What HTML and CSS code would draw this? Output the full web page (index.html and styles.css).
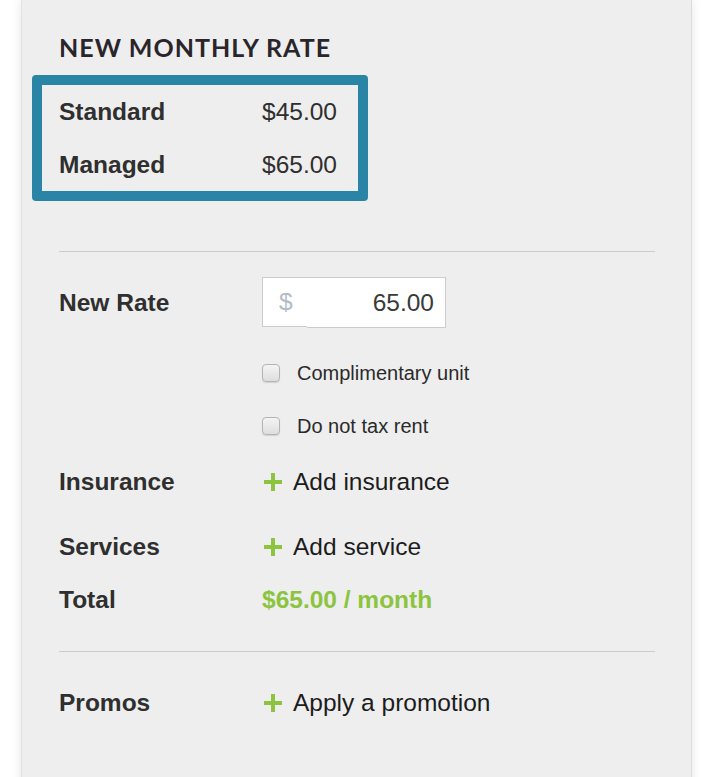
FILE: index.html
```html
<!DOCTYPE html>
<html>
<head>
<meta charset="utf-8">
<link rel="stylesheet" href="styles.css">
</head>
<body>
<div class="panel">
  <h2 class="title">NEW MONTHLY RATE</h2>
  <div class="rates">
    <div class="rate-row"><span class="label">Standard</span><span class="value">$45.00</span></div>
    <div class="rate-row"><span class="label">Managed</span><span class="value">$65.00</span></div>
  </div>
  <hr class="divider first">
  <div class="row newrate">
    <span class="label">New Rate</span>
    <div class="money">
      <span class="addon">$</span>
      <span class="field">65.00</span>
    </div>
  </div>
  <div class="row check first-check">
    <span></span>
    <label class="cb"><span class="box"></span>Complimentary unit</label>
  </div>
  <div class="row check second-check">
    <span></span>
    <label class="cb"><span class="box"></span>Do not tax rent</label>
  </div>
  <div class="row insurance">
    <span class="label">Insurance</span>
    <span class="add"><svg class="plus" viewBox="0 0 18 18" width="18" height="18"><rect x="7" y="0" width="4" height="18" fill="#8cc43f"/><rect x="0" y="7" width="18" height="4" fill="#8cc43f"/></svg>Add insurance</span>
  </div>
  <div class="row services">
    <span class="label">Services</span>
    <span class="add"><svg class="plus" viewBox="0 0 18 18" width="18" height="18"><rect x="7" y="0" width="4" height="18" fill="#8cc43f"/><rect x="0" y="7" width="18" height="4" fill="#8cc43f"/></svg>Add service</span>
  </div>
  <div class="row total">
    <span class="label">Total</span>
    <span class="total-value">$65.00 / month</span>
  </div>
  <hr class="divider second">
  <div class="row promos">
    <span class="label">Promos</span>
    <span class="add"><svg class="plus" viewBox="0 0 18 18" width="18" height="18"><rect x="7" y="0" width="4" height="18" fill="#8cc43f"/><rect x="0" y="7" width="18" height="4" fill="#8cc43f"/></svg>Apply a promotion</span>
  </div>
</div>
</body>
</html>
```
FILE: styles.css
```css
html, body {
  margin: 0;
  padding: 0;
  background: #ffffff;
}
body {
  font-family: "Liberation Sans", Arial, sans-serif;
  color: #2f2f2f;
  overflow: hidden;
}
.panel {
  margin-left: 21px;
  width: 671px;
  box-sizing: border-box;
  min-height: 800px;
  background: #eeeeee;
  border-left: 1px solid #e2e2e2;
  border-right: 1px solid #dcdcdc;
  box-shadow: 0 0 10px rgba(0, 0, 0, 0.10);
  padding: 33px 36px 60px 37px;
}
.title {
  margin: 0;
  font-family: Lato, "Liberation Sans", sans-serif;
  font-weight: 700;
  font-size: 25px;
  line-height: 29px;
  letter-spacing: 1px;
  color: #29252b;
}
.rates {
  margin: 13px 0 0 -27px;
  width: 336px;
  box-sizing: border-box;
  border: 10px solid #2a84a5;
  border-radius: 4px;
  padding: 12px 21px 11px 17px;
  display: flex;
  flex-direction: column;
  gap: 23px;
}
.rate-row {
  display: grid;
  grid-template-columns: 203px 1fr;
  font-size: 24.5px;
  line-height: 30px;
}
.label {
  font-weight: 700;
  font-size: 24.5px;
  line-height: 30px;
  color: #2f2f2f;
}
.value {
  color: #2f2f2f;
}
.divider {
  border: 0;
  border-top: 1px solid #cccccc;
  margin: 0;
  height: 0;
}
.divider.first {
  margin-top: 50px;
}
.row {
  display: grid;
  grid-template-columns: 203px 1fr;
  align-items: center;
}
.newrate {
  margin-top: 25px;
}
.money {
  display: flex;
  align-items: flex-start;
}
.addon {
  width: 45px;
  height: 50px;
  box-sizing: border-box;
  border: 1px solid #cccccc;
  border-right: 0;
  background: #ffffff;
  color: #b2bcc4;
  font-size: 24.5px;
  line-height: 48px;
  padding-left: 16px;
}
.field {
  width: 139px;
  height: 51px;
  box-sizing: border-box;
  border: 1px solid #cccccc;
  border-left: 0;
  background: #ffffff;
  color: #3a3a3a;
  font-size: 24.5px;
  line-height: 49px;
  text-align: right;
  padding-right: 11px;
}
.check {
  font-size: 20px;
  line-height: 24px;
}
.first-check {
  margin-top: 33px;
}
.second-check {
  margin-top: 29px;
}
.cb {
  display: flex;
  align-items: center;
  color: #2a2a2a;
}
.box {
  width: 18px;
  height: 18px;
  box-sizing: border-box;
  border: 1px solid #b4b4b4;
  border-radius: 4px;
  background: linear-gradient(#f4f4f4, #dedede);
  box-shadow: 0 1px 1px rgba(0, 0, 0, 0.12);
  margin-right: 17px;
}
.insurance {
  margin-top: 29px;
}
.services {
  margin-top: 35px;
}
.total {
  margin-top: 23px;
}
.divider.second {
  margin-top: 36px;
}
.promos {
  margin-top: 36px;
}
.add {
  display: flex;
  align-items: center;
  font-size: 24.5px;
  line-height: 30px;
  color: #1c1c1c;
}
.plus {
  margin-left: 2px;
  margin-right: 11px;
}
.total-value {
  font-size: 24.5px;
  line-height: 30px;
  font-weight: 700;
  color: #8cc43f;
}
```
